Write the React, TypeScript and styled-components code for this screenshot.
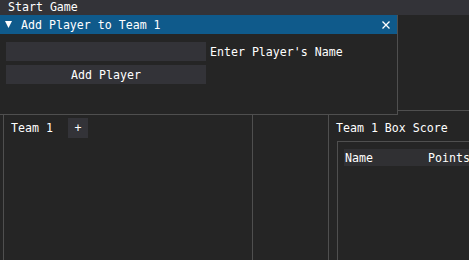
import styled, { createGlobalStyle } from "styled-components";

const bg = "#252525";
const border = "#4f4f4f";
const frame = "#333338";

const GlobalStyle = createGlobalStyle`
  html, body {
    margin: 0;
    padding: 0;
    background: ${bg};
  }
  body {
    width: 469px;
    height: 260px;
    overflow: hidden;
    color: #ffffff;
    font-family: "DejaVu Sans Mono", "Liberation Mono", monospace;
    font-size: 11.6px;
  }
`;

const Screen = styled.div`
  width: 469px;
  height: 260px;
  display: flex;
  flex-direction: column;
`;

const MenuBar = styled.div`
  height: 15px;
  line-height: 15px;
  background: ${frame};
  padding-left: 8px;
  white-space: pre;
`;

const Workspace = styled.div`
  position: relative;
  flex: 1;
  padding-top: 95px;
  display: flex;
  overflow: hidden;
`;

const Panel = styled.div<{ $width: number; $left?: boolean; $right?: boolean; $ml?: number }>`
  box-sizing: border-box;
  width: ${(p) => p.$width}px;
  margin-left: ${(p) => p.$ml ?? 0}px;
  border-top: 1px solid ${border};
  border-left: ${(p) => (p.$left ? `1px solid ${border}` : "none")};
  border-right: ${(p) => (p.$right ? `1px solid ${border}` : "none")};
  display: flex;
  flex-direction: column;
`;

const Row = styled.div<{ $pl: number }>`
  display: flex;
  align-items: center;
  height: 20px;
  margin-top: 7px;
  padding-left: ${(p) => p.$pl}px;
  white-space: pre;
`;

const SmallButton = styled.div`
  width: 20px;
  height: 20px;
  background: ${frame};
  display: flex;
  align-items: center;
  justify-content: center;
  margin-left: 15px;
`;

const TableBox = styled.div`
  margin: 3px 0 0 8px;
  flex: 1;
  border-top: 1px solid ${border};
  border-left: 1px solid ${border};
  padding: 7px 0 0 6px;
`;

const HeaderRow = styled.div`
  height: 17px;
  background: #303033;
  display: flex;
  align-items: center;
  white-space: pre;
`;

const HeaderCell = styled.div<{ $width?: number }>`
  width: ${(p) => (p.$width ? `${p.$width}px` : "auto")};
  padding-left: 1px;
  flex-shrink: 0;
`;

const FloatWindow = styled.div`
  position: absolute;
  left: 0;
  top: 0;
  width: 398px;
  height: 100px;
  box-sizing: border-box;
  background: ${bg};
  border-right: 1px solid ${border};
  border-bottom: 1px solid ${border};
`;

const TitleBar = styled.div`
  height: 19px;
  background: #0f5a8b;
  display: flex;
  align-items: center;
  padding-left: 5px;
  white-space: pre;
`;

const TitleText = styled.span`
  margin-left: 9px;
  flex: 1;
`;

const CloseIcon = styled.svg`
  margin-right: 7px;
`;

const WindowBody = styled.div`
  padding: 8px 6px;
  display: flex;
  flex-direction: column;
  gap: 4px;
`;

const FieldRow = styled.div`
  display: flex;
  align-items: center;
  gap: 4px;
  white-space: pre;
`;

const Input = styled.div`
  width: 200px;
  height: 19px;
  background: ${frame};
`;

const WideButton = styled.div`
  width: 200px;
  height: 19px;
  background: ${frame};
  display: flex;
  align-items: center;
  justify-content: center;
  white-space: pre;
`;

export default function App() {
  return (
    <>
      <GlobalStyle />
      <Screen>
        <MenuBar>Start Game</MenuBar>
        <Workspace>
          <Panel $width={250} $left $right $ml={3}>
            <Row $pl={7}>
              Team 1
              <SmallButton>+</SmallButton>
            </Row>
          </Panel>
          <Panel $width={76} $right />
          <Panel $width={140}>
            <Row $pl={7}>Team 1 Box Score</Row>
            <TableBox>
              <HeaderRow>
                <HeaderCell $width={82}>Name</HeaderCell>
                <HeaderCell>Points</HeaderCell>
              </HeaderRow>
            </TableBox>
          </Panel>
          <FloatWindow>
            <TitleBar>
              <svg width="7" height="7" viewBox="0 0 7 7">
                <polygon points="0,0 7,0 3.5,7" fill="#ffffff" />
              </svg>
              <TitleText>Add Player to Team 1</TitleText>
              <CloseIcon width="8" height="8" viewBox="0 0 8 8">
                <path d="M0.5 0.5 L7.5 7.5 M7.5 0.5 L0.5 7.5" stroke="#ffffff" strokeWidth="1.3" />
              </CloseIcon>
            </TitleBar>
            <WindowBody>
              <FieldRow>
                <Input />
                Enter Player's Name
              </FieldRow>
              <WideButton>Add Player</WideButton>
            </WindowBody>
          </FloatWindow>
        </Workspace>
      </Screen>
    </>
  );
}
